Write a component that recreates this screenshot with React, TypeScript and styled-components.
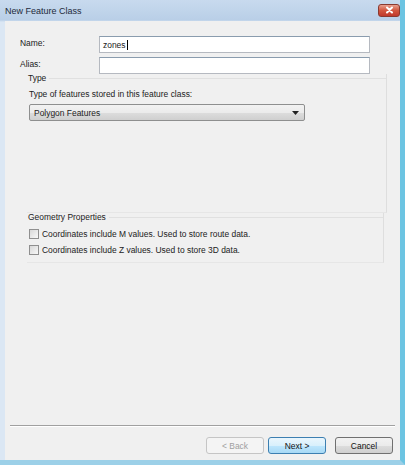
import React from 'react';
import styled, { createGlobalStyle } from 'styled-components';

const Global = createGlobalStyle`
  html, body { margin: 0; padding: 0; background: #c9dcef; }
  body { font-family: 'Liberation Sans', Arial, sans-serif; font-size: 8.45px; color: #222; }
`;

const Frame = styled.div`
  width: 405px;
  height: 465px;
  box-sizing: border-box;
  display: flex;
  flex-direction: column;
  background: linear-gradient(#c8daee, #b9cfe7 20px, #dbe7f4 22px, #dbe7f4);
  border-right: 5px solid #6cc4e2;
  border-bottom: 5px solid #9cd0e8;
  padding-left: 5px;
`;

const TitleBar = styled.div`
  height: 21px;
  display: flex;
  align-items: center;
  justify-content: space-between;
  font-size: 9px;
  color: #1e2a3a;
`;

const CloseButton = styled.div`
  width: 20px;
  height: 11px;
  margin-top: -1px;
  border-radius: 3px;
  border: 1px solid #8a3a30;
  background: linear-gradient(#e8a090, #d2563f 50%, #c0392b);
  display: flex;
  align-items: center;
  justify-content: center;
`;

const Client = styled.div`
  flex: 1;
  background: #f0f0f0;
  display: flex;
  flex-direction: column;
  padding-top: 15px;
`;

const Fields = styled.div`
  display: flex;
  flex-direction: column;
  gap: 4px;
`;

const FieldRow = styled.div`
  display: flex;
  align-items: center;
  padding-left: 15px;
  height: 17px;
`;

const Label = styled.div`
  width: 79px;
  margin-top: -4px;
`;

const TextBox = styled.div`
  width: 266px;
  height: 15px;
  background: #fff;
  border: 1px solid #b5b9c0;
  border-top-color: #8a9cae;
  padding-left: 3px;
  display: flex;
  align-items: center;
`;

const Caret = styled.span`
  display: inline-block;
  width: 1px;
  height: 10px;
  background: #000;
  margin-left: 1px;
`;

const GroupBox = styled.div<{ $height: number; $width: number }>`
  margin-left: 22px;
  width: ${(p) => p.$width}px;
  height: ${(p) => p.$height}px;
  box-sizing: border-box;
  border-right: 1px solid #dedede;
  border-bottom: 1px solid #e6e6e6;
  display: flex;
  flex-direction: column;
`;

const GroupTitle = styled.div`
  padding-left: 1px;
  height: 8px;
  line-height: 8px;
  display: flex;
  align-items: center;
  gap: 3px;
`;

const GroupLine = styled.div`
  flex: 1;
  height: 1px;
  background: #e0e0e0;
`;

const GroupBody = styled.div<{ $top: number }>`
  padding: ${(p) => p.$top}px 0 0 2px;
  display: flex;
  flex-direction: column;
`;

const Caption = styled.div`
  height: 10px;
  line-height: 10px;
`;

const Combo = styled.div`
  margin-top: 5px;
  width: 276px;
  height: 17px;
  box-sizing: border-box;
  border: 1px solid #8e8f8f;
  border-radius: 2px;
  background: linear-gradient(#f2f2f2, #ebebeb 50%, #dddddd 51%, #cfcfcf);
  display: flex;
  align-items: center;
  justify-content: space-between;
  padding: 0 5px 0 4px;
`;

const CheckRow = styled.label`
  display: flex;
  align-items: center;
  gap: 3px;
  height: 16px;
`;

const CheckBox = styled.span`
  width: 10px;
  height: 10px;
  border: 1px solid #8f8f8f;
  background: linear-gradient(135deg, #d8d8d8, #f8f8f8);
  box-sizing: border-box;
`;

const Spacer = styled.div`
  flex: 1;
`;

const Separator = styled.div`
  margin: 0 5px;
  height: 2px;
  box-sizing: border-box;
  border-top: 1px solid #a0a0a0;
  border-bottom: 1px solid #ffffff;
`;

const ButtonBar = styled.div`
  display: flex;
  justify-content: flex-end;
  align-items: flex-start;
  gap: 4px;
  padding: 10px 7px 0 0;
  height: 33px;
  box-sizing: border-box;
`;

const Button = styled.div<{ $disabled?: boolean; $default?: boolean; $gapLeft?: number }>`
  width: 58px;
  height: 17px;
  box-sizing: border-box;
  border: 1px solid ${(p) => (p.$disabled ? '#c5c5c5' : p.$default ? '#3c7fb1' : '#707070')};
  border-radius: 3px;
  margin-left: ${(p) => p.$gapLeft ?? 0}px;
  background: ${(p) =>
    p.$disabled
      ? '#f4f4f4'
      : p.$default
      ? 'linear-gradient(#eaf6fd, #d9f0fc 50%, #bee6fd 51%, #a7d9f5)'
      : 'linear-gradient(#f2f2f2, #ebebeb 50%, #dddddd 51%, #cfcfcf)'};
  color: ${(p) => (p.$disabled ? '#a0a0a0' : '#111')};
  display: flex;
  align-items: center;
  justify-content: center;
`;

export default function App() {
  return (
    <>
      <Global />
      <Frame>
        <TitleBar>
          <span>New Feature Class</span>
          <CloseButton>
            <svg width="9" height="8" viewBox="0 0 9 8">
              <path d="M2 1.5 L7 6.5 M7 1.5 L2 6.5" stroke="#fff" strokeWidth="2" strokeLinecap="round" />
            </svg>
          </CloseButton>
        </TitleBar>
        <Client>
          <Fields>
            <FieldRow>
              <Label>Name:</Label>
              <TextBox>
                zones<Caret />
              </TextBox>
            </FieldRow>
            <FieldRow>
              <Label>Alias:</Label>
              <TextBox />
            </FieldRow>
          </Fields>
          <GroupBox $height={139} $width={360}>
            <GroupTitle>
              <span>Type</span>
              <GroupLine />
            </GroupTitle>
            <GroupBody $top={7}>
              <Caption>Type of features stored in this feature class:</Caption>
              <Combo>
                <span>Polygon Features</span>
                <svg width="7" height="4" viewBox="0 0 7 4">
                  <path d="M0 0 H7 L3.5 4 Z" fill="#222" />
                </svg>
              </Combo>
            </GroupBody>
          </GroupBox>
          <GroupBox $height={50} $width={357}>
            <GroupTitle>
              <span>Geometry Properties</span>
              <GroupLine />
            </GroupTitle>
            <GroupBody $top={5}>
              <CheckRow>
                <CheckBox />
                Coordinates include M values. Used to store route data.
              </CheckRow>
              <CheckRow>
                <CheckBox />
                Coordinates include Z values. Used to store 3D data.
              </CheckRow>
            </GroupBody>
          </GroupBox>
          <Spacer />
          <Separator />
          <ButtonBar>
            <Button $disabled>&lt; Back</Button>
            <Button $default>Next &gt;</Button>
            <Button $gapLeft={5}>Cancel</Button>
          </ButtonBar>
        </Client>
      </Frame>
    </>
  );
}
